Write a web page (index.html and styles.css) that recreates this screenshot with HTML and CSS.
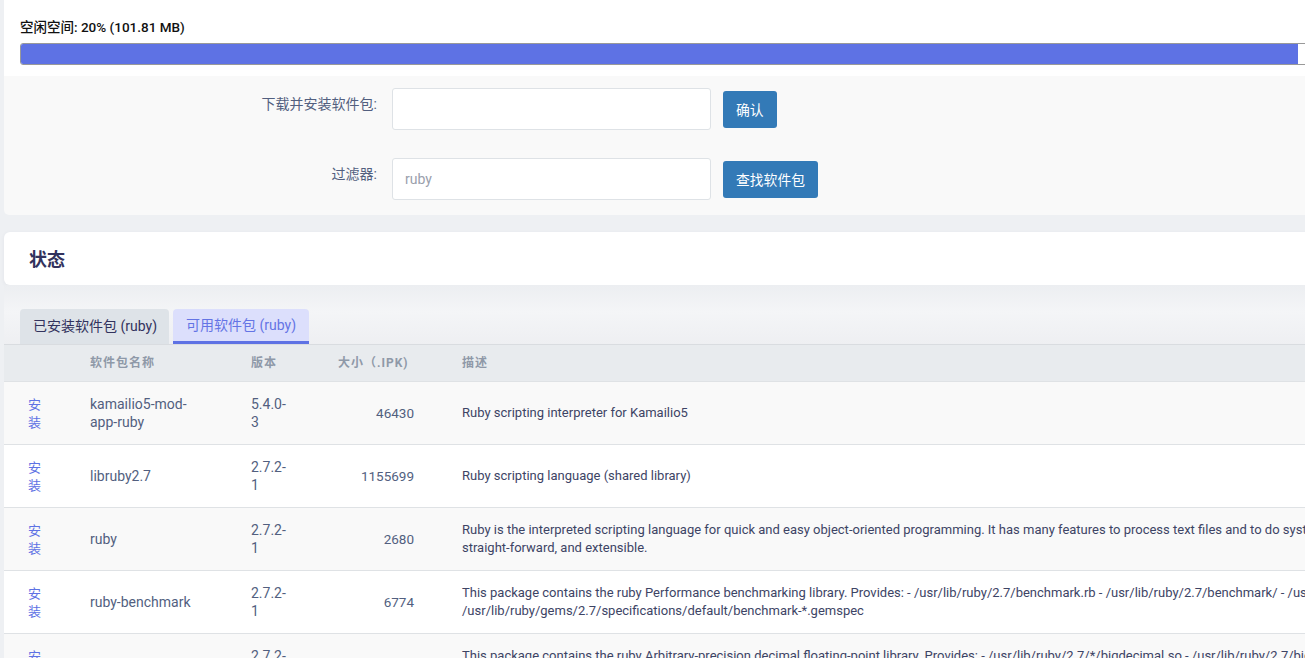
FILE: index.html
```html
<!DOCTYPE html>
<html lang="zh-CN">
<head>
<meta charset="utf-8">
<title>软件包</title>
<link rel="stylesheet" href="styles.css">
</head>
<body>
<div class="page">
  <section class="storage-card">
    <div class="storage-top">
      <div class="free-text">空闲空间: 20% (101.81 MB)</div>
      <div class="bar"><div class="bar-fill" style="width:80%"></div></div>
    </div>
    <div class="form-area">
      <div class="form-row">
        <label class="form-label">下载并安装软件包:</label>
        <input class="form-input" type="text" value="">
        <button class="btn">确认</button>
      </div>
      <div class="form-row">
        <label class="form-label">过滤器:</label>
        <input class="form-input" type="text" placeholder="ruby">
        <button class="btn">查找软件包</button>
      </div>
    </div>
  </section>

  <section class="status-card">
    <h3 class="status-title">状态</h3>
  </section>

  <div class="tabs-wrap">
    <ul class="tabs">
      <li class="tab">已安装软件包 (ruby)</li>
      <li class="tab active">可用软件包 (ruby)</li>
    </ul>
  </div>

  <table class="pkg-table">
    <colgroup>
      <col class="c-act"><col class="c-name"><col class="c-ver"><col class="c-size"><col class="c-desc">
    </colgroup>
    <thead>
      <tr>
        <th class="act"></th>
        <th class="name">软件包名称</th>
        <th class="ver">版本</th>
        <th class="size">大小（.IPK)</th>
        <th class="desc">描述</th>
      </tr>
    </thead>
    <tbody>
      <tr>
        <td class="act"><a href="#">安装</a></td>
        <td class="name">kamailio5-mod-app-ruby</td>
        <td class="ver">5.4.0-3</td>
        <td class="size">46430</td>
        <td class="desc">Ruby scripting interpreter for Kamailio5</td>
      </tr>
      <tr>
        <td class="act"><a href="#">安装</a></td>
        <td class="name">libruby2.7</td>
        <td class="ver">2.7.2-1</td>
        <td class="size">1155699</td>
        <td class="desc">Ruby scripting language (shared library)</td>
      </tr>
      <tr>
        <td class="act"><a href="#">安装</a></td>
        <td class="name">ruby</td>
        <td class="ver">2.7.2-1</td>
        <td class="size">2680</td>
        <td class="desc">Ruby is the interpreted scripting language for quick and easy object-oriented programming. It has many features to process text files and to do system management tasks (as in perl). It is simple, straight-forward, and extensible.</td>
      </tr>
      <tr>
        <td class="act"><a href="#">安装</a></td>
        <td class="name">ruby-benchmark</td>
        <td class="ver">2.7.2-1</td>
        <td class="size">6774</td>
        <td class="desc">This package contains the ruby Performance benchmarking library. Provides: - /usr/lib/ruby/2.7/benchmark.rb - /usr/lib/ruby/2.7/benchmark/ - /usr/lib/ruby/2.7/bm.rb - /usr/lib/ruby/gems/2.7/specifications/default/benchmark-*.gemspec</td>
      </tr>
      <tr>
        <td class="act"><a href="#">安装</a></td>
        <td class="name">ruby-bigdecimal</td>
        <td class="ver">2.7.2-1</td>
        <td class="size">45810</td>
        <td class="desc">This package contains the ruby Arbitrary-precision decimal floating-point library. Provides: - /usr/lib/ruby/2.7/*/bigdecimal.so - /usr/lib/ruby/2.7/bigdecimal/ - /usr/lib/ruby/gems/2.7/specifications/default/bigdecimal-*.gemspec</td>
      </tr>
    </tbody>
  </table>
</div>
</body>
</html>
```
FILE: styles.css
```css
html, body {
  margin: 0;
  padding: 0;
  overflow: hidden;
}
body {
  background: #eef0f3;
  font-family: Roboto, "Noto Sans CJK SC", sans-serif;
  font-size: 13px;
  color: #32325d;
}
.page {
  width: 1630px;
  margin-left: 4px;
}
.storage-card {
  border-radius: 0 0 5px 5px;
  overflow: hidden;
}
.storage-top {
  background: #fff;
  padding: 18px 16px 11px;
}
.free-text {
  line-height: 18px;
  font-size: 13.5px;
  font-weight: 500;
  color: #111;
  margin-bottom: 7px;
}
.bar {
  height: 20px;
  border: 1px solid #999;
  border-radius: 3px;
  background: #fff;
  overflow: hidden;
}
.bar-fill {
  height: 100%;
  background: #5e72e4;
}
.form-area {
  background: #f9f9f9;
  padding: 12px 0 15px;
  display: flex;
  flex-direction: column;
  gap: 28px;
}
.form-row {
  display: flex;
  align-items: center;
}
.form-label {
  width: 373px;
  text-align: right;
  font-size: 14px;
  color: #525f7f;
  align-self: flex-start;
  padding-top: 7px;
  line-height: 18px;
}
.form-input {
  margin-left: 15px;
  width: 319px;
  height: 42px;
  box-sizing: border-box;
  border: 1px solid #dee2e6;
  border-radius: 3px;
  background: #fff;
  padding: 0 12px;
  font-family: Roboto, "Noto Sans CJK SC", sans-serif;
  font-size: 14px;
  color: #525f7f;
  outline: none;
}
.form-input::placeholder {
  color: #9aa0ac;
}
.btn {
  margin-left: 12px;
  height: 37px;
  padding: 0 13px;
  border: 0;
  border-radius: 3px;
  background: #337ab7;
  color: #fff;
  font-family: Roboto, "Noto Sans CJK SC", sans-serif;
  font-size: 13.8px;
}
.status-card {
  margin-top: 17px;
  background: #fff;
  border-radius: 6px;
  box-shadow: 0 1px 4px rgba(50, 50, 93, 0.06);
  height: 53px;
  display: flex;
  align-items: center;
  padding: 0 25px;
}
.status-title {
  margin: 0 0 2px;
  font-size: 18px;
  font-weight: 700;
  color: #32325d;
}
.tabs-wrap {
  padding: 24px 16px 0;
  background: linear-gradient(#eceef1, #f4f5f7 45%, #eeeff2);
}
.tabs {
  list-style: none;
  margin: 0;
  padding: 0;
  display: flex;
  gap: 4px;
}
.tab {
  height: 35px;
  box-sizing: border-box;
  padding: 0 12px 0 13px;
  line-height: 35px;
  font-size: 14px;
  background: #dee3e8;
  color: #32325d;
  border-radius: 4px 4px 0 0;
}
.tab.active {
  background: #dcdffc;
  color: #6474e5;
  border-bottom: 3px solid #5e72e4;
  line-height: 32px;
  padding: 0 13px;
}
.pkg-table {
  width: 100%;
  table-layout: fixed;
  border-collapse: collapse;
}
.c-act { width: 71px; }
.c-name { width: 161px; }
.c-ver { width: 87px; }
.c-size { width: 106px; }
th, td {
  line-height: 18px;
  vertical-align: middle;
  text-align: left;
}
th {
  background: #e8ebee;
  border-top: 1px solid #d9dce0;
  padding: 9px 0;
  font-size: 12px;
  font-weight: 700;
  letter-spacing: 1px;
  color: #8f99a8;
}
td {
  border-top: 1px solid #dfe2e5;
  padding: 13px 0 13px;
  color: #525f7f;
  font-size: 13px;
}
tbody tr:nth-child(odd) td { background: #f9f9f9; }
tbody tr:nth-child(even) td { background: #fff; }
.act { padding-left: 24px; padding-right: 31px; }
td.act { font-family: "Noto Sans CJK SC", sans-serif; }
.act a {
  color: #5e72e4;
  text-decoration: none;
}
.name { padding-left: 15px; padding-right: 36px; }
td.name { font-size: 14px; }
.ver { padding-left: 15px; padding-right: 32px; }
td.ver { font-size: 14px; }
.size { padding-left: 15px; padding-right: 15px; }
td.size { text-align: right; font-size: 13.5px; }
.desc { padding-left: 33px; padding-right: 15px; }
td.desc { color: #3d4465; }
```
